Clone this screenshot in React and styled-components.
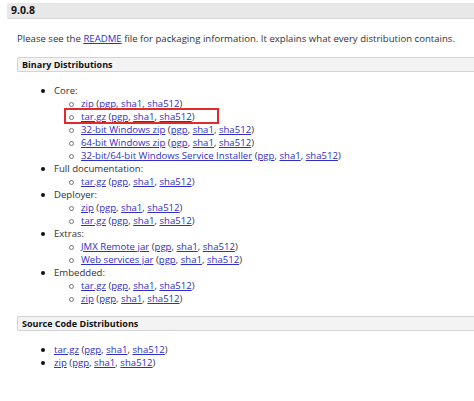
import React from "react";
import styled, { createGlobalStyle, css } from "styled-components";

const Global = createGlobalStyle`
  html, body { margin: 0; padding: 0; background: #fff; }
  body { font-family: "Open Sans", "DejaVu Sans", sans-serif; color: #333; }
`;

const Page = styled.div`
  width: 474px;
  height: 401px;
  overflow: hidden;
  padding-top: 3px;
  box-sizing: border-box;
`;

const VersionHeader = styled.h3`
  margin: 0 0 0 7px;
  height: 15px;
  line-height: 15px;
  padding-left: 4px;
  background: #e8e8e8;
  border-bottom: 1px solid #d6d6d6;
  border-radius: 2px 0 0 2px;
  font-size: 10.5px;
  font-weight: 700;
  color: #111;
`;

const Body = styled.div`
  padding-left: 17px;
`;

const Para = styled.p`
  margin: 13px 0 0 0;
  font-size: 9.6px;
  line-height: 13px;
  color: #333;
`;

const SectionHeader = styled.h4`
  margin: ${(p) => p.$top}px 0 0 0;
  height: 13px;
  line-height: 13px;
  padding-left: 4px;
  background: #f3f3f3;
  border: 1px solid #d4d4d4;
  border-right: none;
  border-radius: 2px 0 0 2px;
  font-size: 9px;
  font-weight: 700;
  color: #111;
`;

const List = styled.ul`
  list-style: none;
  margin: ${(p) => p.$top || 0}px 0 0 0;
  padding: 0 0 0 ${(p) => p.$indent}px;
`;

const Item = styled.li`
  position: relative;
  font-size: 9.6px;
  line-height: 13px;
  white-space: nowrap;
  padding-left: ${(p) => (p.$circle ? 12 : 13)}px;
  &::before {
    content: "";
    position: absolute;
    box-sizing: border-box;
    left: 0;
    top: 5px;
    border-radius: 50%;
    ${(p) =>
      p.$circle
        ? css`
            width: 5px;
            height: 5px;
            border: 1px solid #777;
          `
        : css`
            width: 4px;
            height: 4px;
            background: #111;
          `}
  }
  ${(p) =>
    p.$highlight &&
    css`
      &::after {
        content: "";
        position: absolute;
        left: -5px;
        top: -2px;
        width: 155px;
        height: 16px;
        box-sizing: border-box;
        border: 2px solid #e32a2a;
      }
    `}
`;

const Link = styled.a`
  color: #3030c8;
  text-decoration: underline;
`;

const Hashes = () => (
  <>
    {" "}(<Link href="#">pgp</Link>, <Link href="#">sha1</Link>,{" "}
    <Link href="#">sha512</Link>)
  </>
);

const Sub = ({ label, highlight }) => (
  <Item $circle $highlight={highlight}>
    <Link href="#">{label}</Link>
    <Hashes />
  </Item>
);

const groups = [
  ["Core:", ["zip", "tar.gz", "32-bit Windows zip", "64-bit Windows zip", "32-bit/64-bit Windows Service Installer"]],
  ["Full documentation:", ["tar.gz"]],
  ["Deployer:", ["zip", "tar.gz"]],
  ["Extras:", ["JMX Remote jar", "Web services jar"]],
  ["Embedded:", ["tar.gz", "zip"]],
];

export default function App() {
  return (
    <Page>
      <Global />
      <VersionHeader>9.0.8</VersionHeader>
      <Body>
        <Para>
          Please see the <Link href="#">README</Link> file for packaging information. It explains
          what every distribution contains.
        </Para>
        <SectionHeader $top={12}>Binary Distributions</SectionHeader>
        <List $indent={24} $top={12}>
          {groups.map(([title, items]) => (
            <Item key={title}>
              {title}
              <List $indent={15}>
                {items.map((it, i) => (
                  <Sub key={it + i} label={it} highlight={title === "Core:" && it === "tar.gz"} />
                ))}
              </List>
            </Item>
          ))}
        </List>
        <SectionHeader $top={11}>Source Code Distributions</SectionHeader>
        <List $indent={24} $top={12}>
          <Item>
            <Link href="#">tar.gz</Link>
            <Hashes />
          </Item>
          <Item>
            <Link href="#">zip</Link>
            <Hashes />
          </Item>
        </List>
      </Body>
    </Page>
  );
}
